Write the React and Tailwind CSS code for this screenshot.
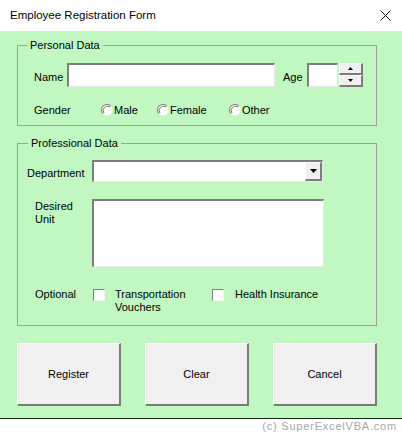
const sunken =
  "bg-white border-t-2 border-l-2 border-r border-b border-t-[#7c7c7c] border-l-[#7c7c7c] border-r-[#e9e9e9] border-b-[#e9e9e9]";
const raised =
  "bg-[#f0f0f0] border-t border-l border-r-2 border-b-2 border-t-white border-l-white border-r-[#7a7a7a] border-b-[#7a7a7a]";

function Radio() {
  return (
    <svg width="12" height="12" viewBox="0 0 12 12" className="shrink-0">
      <circle cx="6" cy="6" r="5.5" fill="#ffffff" />
      <path d="M2.1 9.9 A5.5 5.5 0 0 1 9.9 2.1" fill="none" stroke="#8a8a8a" strokeWidth="1.1" />
      <path d="M3 9 A4.3 4.3 0 0 1 9 3" fill="none" stroke="#5a5a5a" strokeWidth="0.8" />
    </svg>
  );
}

function Check() {
  return (
    <div className="mt-[1px] w-[12px] h-[12px] shrink-0 bg-white border-t border-l border-r border-b border-t-[#7c7c7c] border-l-[#7c7c7c] border-r-[#f4f4f4] border-b-[#f4f4f4]" />
  );
}

function Arrow({ up, w = 5, h = 3 }) {
  return (
    <svg width={w} height={h} viewBox={`0 0 ${w} ${h}`}>
      {up ? (
        <polygon points={`0,${h} ${w},${h} ${w / 2},0`} fill="#000" />
      ) : (
        <polygon points={`0,0 ${w},0 ${w / 2},${h}`} fill="#000" />
      )}
    </svg>
  );
}

export default function App() {
  return (
    <div className="w-[402px] h-[433px] flex flex-col bg-white text-black text-[11px] leading-[13px] font-['Liberation_Sans',Arial,sans-serif]">
      <div className="h-[31px] shrink-0 flex items-center justify-between pl-[10px] pr-[11px] bg-white">
        <span className="text-[11.5px]">Employee Registration Form</span>
        <svg width="11" height="11" viewBox="0 0 11 11">
          <path d="M0.5 0.5L10.5 10.5M10.5 0.5L0.5 10.5" stroke="#111" strokeWidth="1" />
        </svg>
      </div>

      <div className="flex-1 bg-[#c1f8c1] pl-[17px] flex flex-col">
        <fieldset className="mt-[8px] w-[360px] h-[87px] border border-[#a0a0a0]">
          <legend className="ml-[9px] px-[3px] leading-[13px]">Personal Data</legend>
          <div className="pt-[11px]">
            <div className="flex items-center h-[24px] pl-[16px]">
              <span className="w-[33px] pt-[5px]">Name</span>
              <div className={`w-[208px] h-[24px] ${sunken}`} />
              <span className="ml-[8px] w-[24px] pt-[5px]">Age</span>
              <div className={`w-[31px] h-[24px] ${sunken}`} />
              <div className="ml-[1px] w-[24px] h-[24px] flex flex-col">
                <div className={`h-[12px] flex items-center justify-center ${raised}`}>
                  <Arrow up />
                </div>
                <div className={`h-[12px] flex items-center justify-center ${raised}`}>
                  <Arrow />
                </div>
              </div>
            </div>
            <div className="mt-[15px] h-[16px] flex items-center pl-[16px]">
              <span className="w-[67px]">Gender</span>
              <div className="flex items-center w-[56px]">
                <Radio />
                <span className="ml-[1px]">Male</span>
              </div>
              <div className="flex items-center w-[72px]">
                <Radio />
                <span className="ml-[1px]">Female</span>
              </div>
              <div className="flex items-center">
                <Radio />
                <span className="ml-[1px]">Other</span>
              </div>
            </div>
          </div>
        </fieldset>

        <fieldset className="mt-[11px] w-[360px] h-[189px] border border-[#a0a0a0]">
          <legend className="ml-[10px] px-[3px] leading-[13px]">Professional Data</legend>
          <div className="pt-[10px]">
            <div className="flex items-center h-[22px] pl-[9px]">
              <span className="w-[65px] pt-[4px]">Department</span>
              <div className={`w-[231px] h-[22px] flex justify-end ${sunken}`}>
                <div className={`w-[17px] h-full flex items-center justify-center ${raised}`}>
                  <Arrow w={7} h={4} />
                </div>
              </div>
            </div>
            <div className="mt-[17px] flex items-start pl-[17px]">
              <span className="w-[57px] pt-[1px]">
                Desired
                <br />
                Unit
              </span>
              <div className={`w-[232px] h-[68px] ${sunken}`} />
            </div>
            <div className="mt-[21px] flex items-start pl-[17px]">
              <span className="w-[58px]">Optional</span>
              <div className="flex items-start w-[119px]">
                <Check />
                <span className="ml-[10px]">
                  Transportation
                  <br />
                  Vouchers
                </span>
              </div>
              <div className="flex items-start">
                <Check />
                <span className="ml-[11px]">Health Insurance</span>
              </div>
            </div>
          </div>
        </fieldset>

        <div className="mt-[17px] flex gap-[24px]">
          <div className={`w-[104px] h-[63px] flex items-center justify-center ${raised}`}>Register</div>
          <div className={`w-[104px] h-[63px] flex items-center justify-center ${raised}`}>Clear</div>
          <div className={`w-[104px] h-[63px] flex items-center justify-center ${raised}`}>Cancel</div>
        </div>
      </div>

      <div className="h-[1px] shrink-0 bg-[#142814]" />
      <div className="h-[14px] shrink-0 flex items-center justify-end pr-[5px] text-[#a6a6a6] tracking-[0.8px]">
        (c) SuperExcelVBA.com
      </div>
    </div>
  );
}
